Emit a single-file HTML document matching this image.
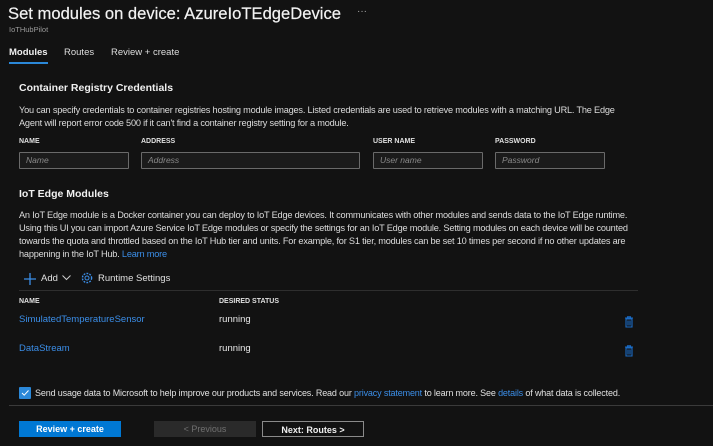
<!DOCTYPE html>
<html><head><style>
body{margin:0;width:713px;height:446px;background:#121212;color:#e8e8e8;font-family:"Liberation Sans",sans-serif;position:relative;overflow:hidden}
.a{position:absolute;white-space:nowrap}
.p{font-size:9.2px;letter-spacing:-0.2px;line-height:13px;color:#dcdcdc}
.lbl{font-size:7px;font-weight:bold;color:#e0e0e0}
.in{position:absolute;top:152px;border:1px solid #6a6a6a;background:#1b1b1b;border-radius:1px;font-size:8.5px;font-style:italic;color:#8a8a8a;line-height:15px;padding-left:6px;box-sizing:border-box;height:17px}
.lnk{color:#3b8ee8}
.btn{position:absolute;top:421px;height:16px;font-size:9px;font-weight:bold;text-align:center;line-height:16px;box-sizing:border-box}
</style></head><body>
<div class="a" style="left:8px;top:4px;font-size:16.6px;color:#f2f2f2;-webkit-text-stroke:0.2px #f2f2f2">Set modules on device: AzureIoTEdgeDevice</div>
<div class="a" style="left:357px;top:6px;font-size:10px;color:#aaa">···</div>
<div class="a" style="left:9px;top:25px;font-size:7.5px;color:#9a9a9a">IoTHubPilot</div>
<div class="a" style="left:9px;top:47px;font-size:9.5px;font-weight:bold;color:#f0f0f0">Modules</div>
<div style="position:absolute;left:9px;top:62px;width:39px;height:2px;background:#2b88d8"></div>
<div class="a" style="left:64px;top:47px;font-size:9.5px;color:#ddd">Routes</div>
<div class="a" style="left:111px;top:47px;font-size:9.5px;color:#ddd">Review + create</div>
<div class="a" style="left:19px;top:82px;font-size:10.5px;font-weight:bold;color:#f0f0f0">Container Registry Credentials</div>
<div class="a p" style="left:19px;top:104px">You can specify credentials to container registries hosting module images. Listed credentials are used to retrieve modules with a matching URL. The Edge<br>Agent will report error code 500 if it can't find a container registry setting for a module.</div>
<div class="a lbl" style="left:19px;top:138px">NAME</div>
<div class="a lbl" style="left:141px;top:138px">ADDRESS</div>
<div class="a lbl" style="left:373px;top:138px">USER NAME</div>
<div class="a lbl" style="left:495px;top:138px">PASSWORD</div>
<div class="in" style="left:19px;width:110px">Name</div>
<div class="in" style="left:141px;width:219px">Address</div>
<div class="in" style="left:373px;width:110px">User name</div>
<div class="in" style="left:495px;width:110px">Password</div>
<div class="a" style="left:19px;top:188px;font-size:10.5px;font-weight:bold;color:#f0f0f0">IoT Edge Modules</div>
<div class="a p" style="left:19px;top:209px">An IoT Edge module is a Docker container you can deploy to IoT Edge devices. It communicates with other modules and sends data to the IoT Edge runtime.<br>Using this UI you can import Azure Service IoT Edge modules or specify the settings for an IoT Edge module. Setting modules on each device will be counted<br>towards the quota and throttled based on the IoT Hub tier and units. For example, for S1 tier, modules can be set 10 times per second if no other updates are<br>happening in the IoT Hub. <span class="lnk">Learn more</span></div>
<svg class="a" style="left:24px;top:273px" width="12" height="12"><path d="M6 0V12M0 6H12" stroke="#3b8ee8" stroke-width="1.3"/></svg>
<div class="a" style="left:41px;top:273px;font-size:9.5px;color:#e0e0e0">Add</div>
<svg class="a" style="left:62px;top:275px" width="9" height="6"><path d="M0.5 0.5L4.5 4.5L8.5 0.5" stroke="#ccc" fill="none"/></svg>
<svg class="a" style="left:81px;top:272px" width="12" height="12" viewBox="0 0 12 12"><circle cx="6" cy="6" r="2" stroke="#3b8ee8" fill="none"/><circle cx="6" cy="6" r="4.6" stroke="#3b8ee8" stroke-width="1.4" stroke-dasharray="1.8 1.2" fill="none"/></svg>
<div class="a" style="left:98px;top:273px;font-size:9.5px;color:#e0e0e0">Runtime Settings</div>
<div style="position:absolute;left:19px;top:290px;width:619px;height:1px;background:#2e2e2e"></div>
<div class="a lbl" style="left:19px;top:298px">NAME</div>
<div class="a lbl" style="left:219px;top:298px">DESIRED STATUS</div>
<div class="a lnk" style="left:19px;top:314px;font-size:9.5px">SimulatedTemperatureSensor</div>
<div class="a" style="left:219px;top:314px;font-size:9.5px">running</div>
<div class="a lnk" style="left:19px;top:343px;font-size:9.5px">DataStream</div>
<div class="a" style="left:219px;top:343px;font-size:9.5px">running</div>
<svg class="a" style="left:624px;top:316px" width="10" height="12"><path d="M1 2H9M3.5 2V0.8H6.5V2M2 3H8V11H2Z M4 4.5V9.5M6 4.5V9.5" stroke="#1a6bc4" stroke-width="1.1" fill="none"/></svg>
<svg class="a" style="left:624px;top:345px" width="10" height="12"><path d="M1 2H9M3.5 2V0.8H6.5V2M2 3H8V11H2Z M4 4.5V9.5M6 4.5V9.5" stroke="#1a6bc4" stroke-width="1.1" fill="none"/></svg>
<div style="position:absolute;left:19px;top:387px;width:12px;height:12px;background:#2b88d8;border-radius:1px"></div>
<svg class="a" style="left:20px;top:388px" width="10" height="10"><path d="M2 5L4.2 7.2L8.5 2.5" stroke="#fff" fill="none"/></svg>
<div class="a" style="left:35px;top:388px;font-size:9px;color:#e0e0e0;letter-spacing:-0.15px">Send usage data to Microsoft to help improve our products and services. Read our <span class="lnk">privacy statement</span> to learn more. See <span class="lnk">details</span> of what data is collected.</div>
<div style="position:absolute;left:9px;top:405px;width:704px;height:1px;background:#3a3a3a"></div>
<div class="btn" style="left:19px;width:102px;background:#0078d4;color:#fff">Review + create</div>
<div class="btn" style="left:154px;width:102px;background:#2a2a2a;color:#707070;font-weight:normal">&lt; Previous</div>
<div class="btn" style="left:262px;width:102px;border:1px solid #8a8a8a;color:#f0f0f0">Next: Routes &gt;</div>
</body></html>
